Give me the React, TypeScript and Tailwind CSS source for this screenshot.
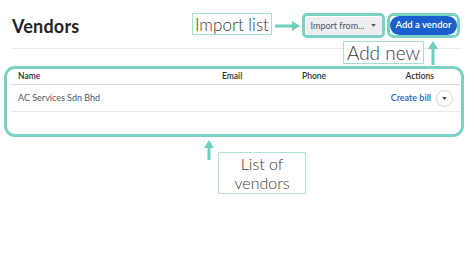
const teal = 'border-[#7ad2c4]';

function ArrowRight() {
  return (
    <svg width="30" height="22" viewBox="0 0 30 22" className="shrink-0">
      <line x1="3" y1="11" x2="22" y2="11" stroke="#6fcfbf" strokeWidth="3" />
      <polygon points="20,6 28,11 20,16" fill="#6fcfbf" />
    </svg>
  );
}

function ArrowUp({ h }: { h: number }) {
  return (
    <svg width="12" height={h} viewBox={`0 0 12 ${h}`} className="shrink-0">
      <line x1="6" y1="6" x2="6" y2={h} stroke="#6fcfbf" strokeWidth="3" />
      <polygon points="1,8 6,0 11,8" fill="#6fcfbf" />
    </svg>
  );
}

function Caret({ className }: { className?: string }) {
  return (
    <svg width="5" height="3" viewBox="0 0 6 4" className={className}>
      <polygon points="0,0 6,0 3,4" fill="currentColor" />
    </svg>
  );
}

export default function App() {
  return (
    <div
      className="relative w-[474px] h-[266px] overflow-hidden bg-white text-[#1f2328]"
      style={{ fontFamily: 'Lato, "Noto Sans", sans-serif' }}
    >
      {/* header */}
      <div className="flex items-center mt-[13px] h-[25px] pl-[12px] pr-[14px]">
        <h1 className="flex-1 text-[18px] font-bold leading-none tracking-[0.2px]">Vendors</h1>
        <div className="w-[80px] h-[22px] -mt-[3px] flex items-center justify-center border border-[#a9ddd5] text-[17px] leading-none text-[#3a3a3a] font-light">
          Import list
        </div>
        <ArrowRight />
        <div className={`w-[83px] h-[25px] border-[3px] ${teal} rounded-[5px] flex items-center justify-center`}>
          <div className="w-[76px] h-[18px] rounded-[3px] bg-[#eceef2] flex items-center justify-center gap-[7px] text-[9px] text-[#4b5563]">
            <span>Import from...</span>
            <Caret className="text-[#555]" />
          </div>
        </div>
        <div className={`ml-[2px] w-[73px] h-[25px] border-[3px] ${teal} rounded-[7px] flex items-center justify-center`}>
          <div className="w-[69px] h-[19px] rounded-full bg-[#1a5fcd] flex items-center justify-center text-white text-[9.5px] font-semibold">
            Add a vendor
          </div>
        </div>
      </div>

      <div className="mt-[10px] mx-[12px] h-px bg-[#e8eaed]" />

      {/* table */}
      <div className={`mt-[17px] ml-[4px] w-[460px] border-[3px] ${teal} rounded-[11px] pb-[22px]`}>
        <div className="ml-[4px] mr-[1px]">
          <div className="flex items-center h-[16px] pl-[7px] pr-[7px] text-[8.5px] font-semibold text-[#2a2f36] border-b border-[#d6d9de]">
            <div className="w-[204px]">Name</div>
            <div className="w-[80px]">Email</div>
            <div className="w-[79px]">Phone</div>
            <div className="w-[72px] text-right pr-[19px]">Actions</div>
          </div>
          <div className="flex items-center h-[27px] pl-[7px] pr-[7px] text-[9px] text-[#50555c] border-b border-[#e6e8eb]">
            <div className="w-[204px]">AC Services Sdn Bhd</div>
            <div className="w-[80px]" />
            <div className="w-[79px]" />
            <div className="w-[72px] flex items-center justify-end gap-[5px]">
              <span className="text-[#2563c4] font-semibold">Create bill</span>
              <span className="w-[17px] h-[17px] rounded-full border border-[#d2d5da] flex items-center justify-center text-[#444]">
                <Caret />
              </span>
            </div>
          </div>
        </div>
      </div>

      {/* list of vendors annotation */}
      <div className="flex items-start pl-[203px] mt-[3px]">
        <ArrowUp h={20} />
        <div className="ml-[3px] mt-[12px] w-[88px] h-[42px] border border-[#b3e2da] flex flex-col items-center justify-center text-[16px] leading-[19px] text-[#3a3a3a] font-light">
          <span>List of</span>
          <span>vendors</span>
        </div>
      </div>

      {/* add new annotation */}
      <div className="absolute left-[343px] top-[41px] w-[81px] h-[23px] bg-white border border-[#a9ddd5] flex items-center justify-center text-[19px] leading-none text-[#3a3a3a] font-light">
        Add new
      </div>
      <div className="absolute left-[427px] top-[41px]">
        <ArrowUp h={24} />
      </div>
    </div>
  );
}
